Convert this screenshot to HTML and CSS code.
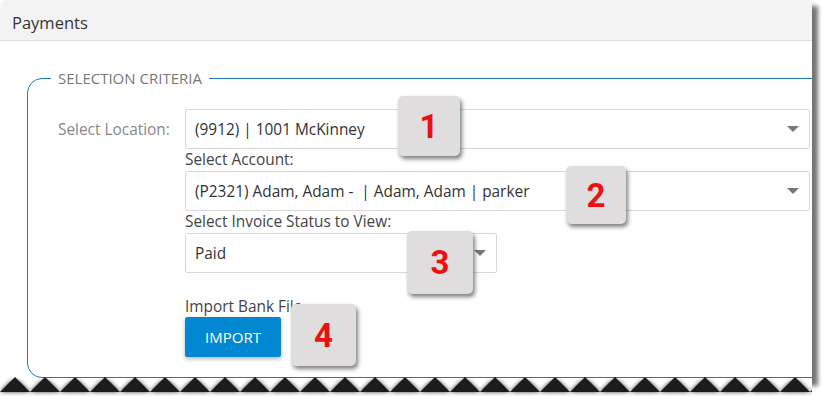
FILE: index.html
```html
<!DOCTYPE html>
<html>
<head>
<meta charset="utf-8">
<link rel="stylesheet" href="styles.css">
</head>
<body>
<div class="sheet">
  <div class="page">
    <div class="header">Payments</div>
    <div class="content">
      <fieldset class="criteria">
        <legend>SELECTION CRITERIA</legend>
        <div class="row">
          <label class="side-label">Select Location:</label>
          <div class="select wide"><span>(9912) | 1001 McKinney</span><i class="caret"></i></div>
        </div>
        <div class="field">
          <label class="top-label">Select Account:</label>
          <div class="select wide"><span>(P2321) Adam, Adam -&nbsp; | Adam, Adam | parker</span><i class="caret"></i></div>
        </div>
        <div class="field">
          <label class="top-label">Select Invoice Status to View:</label>
          <div class="select narrow"><span>Paid</span><i class="caret"></i></div>
        </div>
        <div class="field import">
          <label class="top-label">Import Bank File</label>
          <button class="btn">IMPORT</button>
        </div>
      </fieldset>
    </div>
    <div class="badge b1">1</div>
    <div class="badge b2">2</div>
    <div class="badge b3">3</div>
    <div class="badge b4">4</div>
  </div>
  <div class="torn">
    <svg width="812" height="28" viewBox="0 0 812 28">
      <defs>
        <pattern id="teeth" width="30" height="28" patternUnits="userSpaceOnUse">
          <path d="M0 15 L15 0 L30 15 Z" fill="#1a1a1a"/>
        </pattern>
        <filter id="soft" x="-5%" y="-50%" width="110%" height="200%">
          <feGaussianBlur stdDeviation="0.7"/>
        </filter>
        <filter id="softer" x="-5%" y="-50%" width="110%" height="200%">
          <feGaussianBlur stdDeviation="2.2"/>
        </filter>
      </defs>
      <rect x="0" y="3" width="812" height="25" fill="#fff"/>
      <rect x="1" y="4" width="812" height="20" fill="url(#teeth)" filter="url(#softer)" opacity="0.85"/>
      <rect x="0" y="0" width="812" height="16" fill="url(#teeth)" filter="url(#soft)"/>
    </svg>
  </div>
</div>
</body>
</html>
```
FILE: styles.css
```css
body {
  margin: 0;
  background: #fff;
  font-family: "Open Sans", "Noto Sans", sans-serif;
}

.sheet {
  width: 812px;
}

.page {
  position: relative;
  height: 380px;
  overflow: hidden;
  background: #fff;
  border-top-left-radius: 6px;
  box-shadow: 6px 6px 4px rgba(0, 0, 0, 0.55);
}

.header {
  height: 41px;
  box-sizing: border-box;
  background: #f3f3f3;
  border-bottom: 1px solid #dedede;
  padding: 2px 0 0 12px;
  font-size: 16.5px;
  line-height: 42px;
  color: #333;
}

.content {
  padding-left: 27px;
  padding-top: 28px;
}

.criteria {
  width: 900px;
  margin: 0;
  border: 1px solid #1f7ab5;
  border-radius: 15px;
  padding: 22px 0 20px 30px;
}

.criteria legend {
  font-size: 15px;
  line-height: 18px;
  color: #777;
  padding: 0 7px;
  margin-left: -7px;
}

.row {
  display: flex;
  align-items: center;
}

.side-label {
  width: 127px;
  font-size: 15.4px;
  color: #888;
}

.top-label {
  display: block;
  font-size: 15.4px;
  line-height: 22px;
  color: #444;
}

.field {
  margin-left: 127px;
}

.select {
  height: 40px;
  box-sizing: border-box;
  border: 1px solid #d9d9d9;
  border-radius: 2px;
  display: flex;
  align-items: center;
  justify-content: space-between;
  padding: 0 10px 0 9px;
  font-size: 15.4px;
  color: #333;
  background: #fff;
}

.wide {
  width: 625px;
}

.narrow {
  width: 312px;
}

.caret {
  width: 0;
  height: 0;
  border-left: 6px solid transparent;
  border-right: 6px solid transparent;
  border-top: 6px solid #777;
}

.import {
  margin-top: 23px;
}

.import .top-label {
  line-height: 21px;
}

.btn {
  height: 40px;
  width: 96px;
  border: 0;
  border-radius: 2px;
  background: #0288d1;
  color: #fff;
  font-family: "Open Sans", "Noto Sans", sans-serif;
  font-size: 15px;
  box-shadow: 0 2px 4px rgba(0, 0, 0, 0.3);
  padding: 0;
}

.badge {
  position: absolute;
  display: flex;
  align-items: center;
  justify-content: center;
  background: #dfdddd;
  border-radius: 5px;
  box-shadow: 2px 3px 4px rgba(0, 0, 0, 0.5);
  font-family: Roboto, "Liberation Sans", sans-serif;
  font-weight: 700;
  font-size: 33px;
  color: #ec1010;
}

.b1 { left: 398px; top: 96px; width: 62px; height: 60px; }
.b2 { left: 566px; top: 166px; width: 60px; height: 58px; }
.b3 { left: 407px; top: 231px; width: 66px; height: 63px; }
.b4 { left: 291px; top: 304px; width: 65px; height: 62px; }

.torn {
  position: relative;
  margin-top: -3px;
  height: 28px;
}

.torn svg {
  display: block;
}
```
